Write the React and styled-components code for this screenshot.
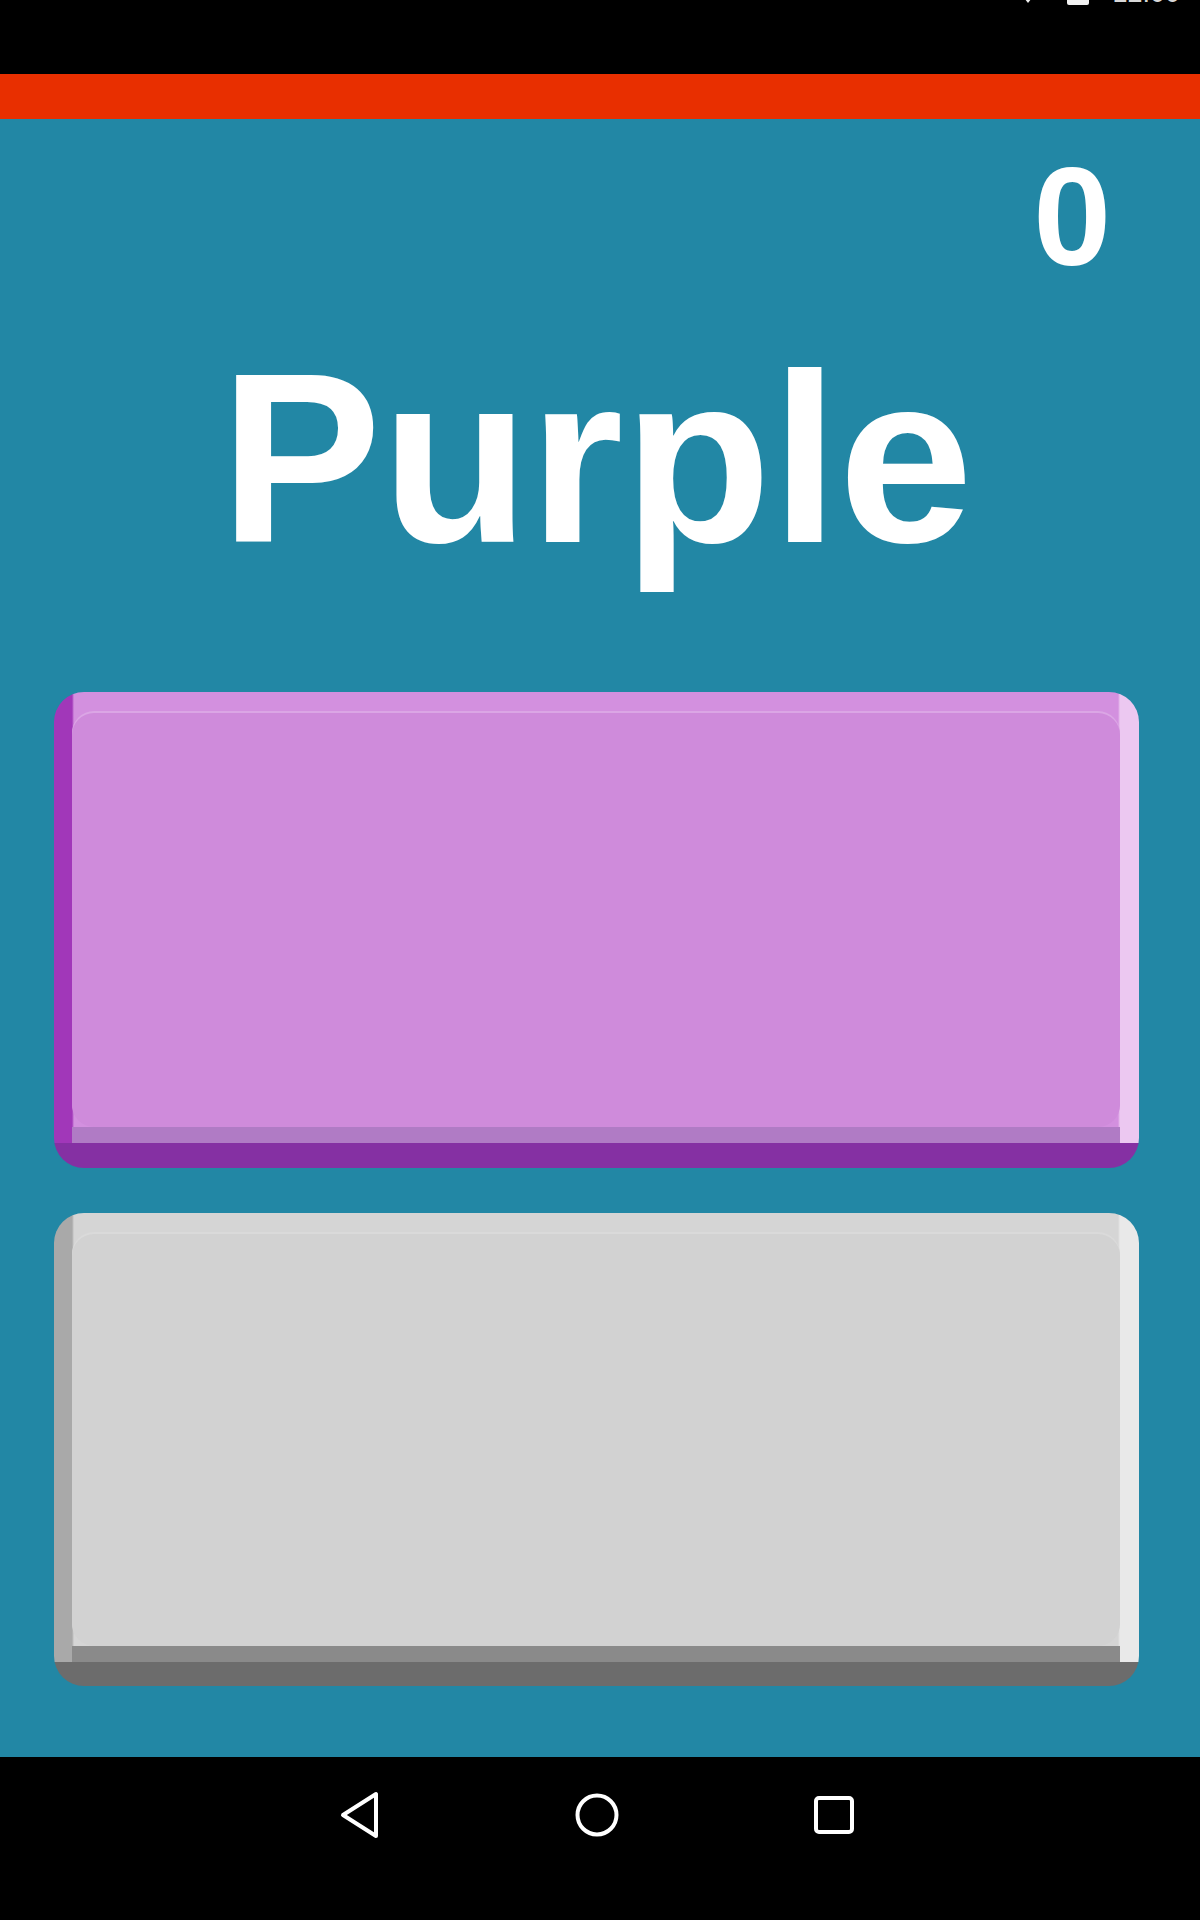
import React from "react";
import styled, { createGlobalStyle } from "styled-components";

const Global = createGlobalStyle`
  html, body { margin: 0; padding: 0; background: #000; }
  body { font-family: "Liberation Sans", Arial, sans-serif; }
`;

const Screen = styled.div`
  width: 1200px;
  height: 1920px;
  display: flex;
  flex-direction: column;
  overflow: hidden;
  background: #000;
`;

const StatusBar = styled.div`
  height: 74px;
  flex: none;
  background: #000;
  display: flex;
  justify-content: flex-end;
  align-items: flex-start;
  overflow: hidden;
  padding-right: 20px;
`;

const StatusIcons = styled.div`
  height: 40px;
  margin-top: -35px;
  display: flex;
  align-items: flex-end;
`;

const Battery = styled.div`
  width: 22px;
  height: 36px;
  margin-left: 19px;
  border-radius: 2px;
  background: #f2f2f2;
`;

const Clock = styled.span`
  margin-left: 23px;
  margin-bottom: -2px;
  font-size: 27px;
  line-height: 27px;
  color: #d8d8d8;
`;

const ActionBar = styled.div`
  height: 45px;
  flex: none;
  background: #e82f00;
`;

const Game = styled.main`
  flex: 1;
  background: #2287a5;
  display: flex;
  flex-direction: column;
`;

const ScoreRow = styled.div`
  display: flex;
  justify-content: flex-end;
  padding: 28px 89px 0 0;
`;

const Score = styled.span`
  color: #fff;
  font-weight: 700;
  font-size: 140px;
  line-height: 140px;
`;

const Word = styled.h1`
  margin: 50px 0 0;
  padding-right: 7px;
  text-align: center;
  color: #fff;
  font-weight: 700;
  font-size: 242px;
  line-height: 242px;
`;

const Choices = styled.div`
  margin-top: 113px;
  padding: 0 61px 0 54px;
  display: flex;
  flex-direction: column;
  gap: 45px;
`;

const Bevel = styled.button`
  all: unset;
  box-sizing: border-box;
  display: flex;
  height: ${(p) => p.$h}px;
  border-radius: 30px;
  padding: 21px 19px ${(p) => p.$t.muted + p.$t.dark}px 18px;
  cursor: pointer;
  background:
    linear-gradient(${(p) => p.$t.mutedC}, ${(p) => p.$t.mutedC})
      18px calc(100% - ${(p) => p.$t.dark}px) / calc(100% - 37px) ${(p) => p.$t.muted}px no-repeat,
    linear-gradient(${(p) => p.$t.darkC}, ${(p) => p.$t.darkC})
      0 100% / 100% ${(p) => p.$t.dark}px no-repeat,
    linear-gradient(
      to right,
      ${(p) => p.$t.left} 18px,
      ${(p) => p.$t.top} 20px,
      ${(p) => p.$t.top} calc(100% - 21px),
      ${(p) => p.$t.right} calc(100% - 19px)
    );
`;

const Face = styled.span`
  flex: 1;
  border-radius: 22px;
  background: ${(p) => p.$c};
  box-shadow: 0 -2px 0 ${(p) => p.$hl};
`;

const NavBar = styled.nav`
  height: 163px;
  flex: none;
  background: #000;
  display: flex;
  justify-content: center;
  align-items: flex-start;
  gap: 177px;
  padding: 30px 6px 0 0;
  box-sizing: border-box;
`;

const NavSlot = styled.div`
  width: 60px;
  height: 56px;
  display: flex;
  align-items: center;
  justify-content: center;
`;

const purple = {
  face: "#cf8bdb",
  hl: "#dba6e5",
  left: "#a137b9",
  top: "#d390df",
  right: "#ecc8f1",
  mutedC: "#b07bc5",
  darkC: "#8530a3",
  muted: 16,
  dark: 25,
};

const grey = {
  face: "#d2d2d2",
  hl: "#dadada",
  left: "#a9a9a9",
  top: "#d5d5d5",
  right: "#e9e9e9",
  mutedC: "#8a8a8a",
  darkC: "#6c6c6c",
  muted: 16,
  dark: 24,
};

function ChoiceButton({ tone, height }) {
  return (
    <Bevel $t={tone} $h={height}>
      <Face $c={tone.face} $hl={tone.hl} />
    </Bevel>
  );
}

export default function App() {
  return (
    <Screen>
      <Global />
      <StatusBar>
        <StatusIcons>
          <svg width="40" height="40" viewBox="0 0 40 40">
            <path d="M0 12 A28 28 0 0 1 40 12 L20 38 Z" fill="#f2f2f2" />
          </svg>
          <Battery />
          <Clock>12:00</Clock>
        </StatusIcons>
      </StatusBar>
      <ActionBar />
      <Game>
        <ScoreRow>
          <Score>0</Score>
        </ScoreRow>
        <Word>Purple</Word>
        <Choices>
          <ChoiceButton tone={purple} height={476} />
          <ChoiceButton tone={grey} height={473} />
        </Choices>
      </Game>
      <NavBar>
        <NavSlot>
          <svg width="42" height="48" viewBox="0 0 42 48">
            <path d="M37 3 L37 45 L4 24 Z" fill="none" stroke="#fff" strokeWidth="4" strokeLinejoin="round" />
          </svg>
        </NavSlot>
        <NavSlot>
          <svg width="46" height="46" viewBox="0 0 46 46">
            <circle cx="23" cy="23" r="19.5" fill="none" stroke="#fff" strokeWidth="4" />
          </svg>
        </NavSlot>
        <NavSlot>
          <svg width="42" height="40" viewBox="0 0 42 40">
            <rect x="3" y="3" width="36" height="34" rx="3" fill="none" stroke="#fff" strokeWidth="4" />
          </svg>
        </NavSlot>
      </NavBar>
    </Screen>
  );
}
